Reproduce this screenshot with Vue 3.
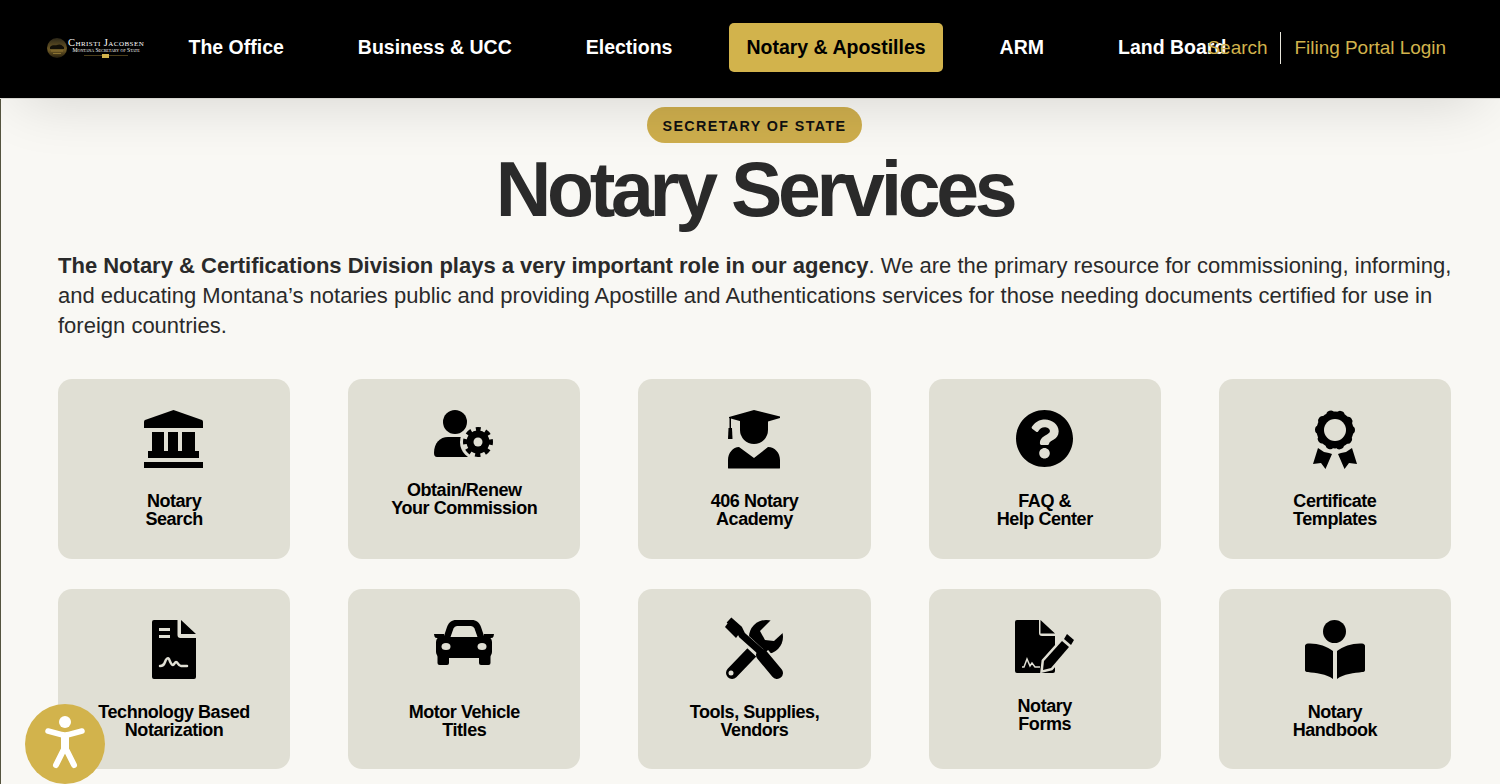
<template>
  <div class="page">
    <header class="topbar">
      <a class="logo">
        <svg class="seal" viewBox="0 0 20 20">
          <defs>
            <linearGradient id="sealGold" x1="0" y1="0" x2="0" y2="1">
              <stop offset="0" stop-color="#2c2718" />
              <stop offset="0.6" stop-color="#6f5a26" />
              <stop offset="1" stop-color="#221c0d" />
            </linearGradient>
          </defs>
          <circle cx="10" cy="10" r="10" fill="url(#sealGold)" />
          <path d="M3 9c3-3 5-1 7-2s4-1 7 2v2H3z" fill="#120f07" />
          <path d="M4 13h12M6 15.5h8" stroke="#9a7f38" stroke-width="0.8" />
        </svg>
        <span class="logo-text">
          <span class="logo-name">Christi Jacobsen</span>
          <span class="logo-sub">Montana Secretary of State</span>
          <span class="logo-rule"><i></i></span>
        </span>
      </a>
      <nav class="nav">
        <a v-for="item in navItems" :key="item" class="nav-item" :class="{ active: item === 'Notary & Apostilles' }">{{ item }}</a>
      </nav>
      <div class="utility">
        <a class="util-link">Search</a>
        <span class="util-sep"></span>
        <a class="util-link">Filing Portal Login</a>
      </div>
    </header>

    <main class="content">
      <div class="intro">
        <span class="badge">SECRETARY OF STATE</span>
        <h1 class="title">Notary Services</h1>
      </div>
      <p class="lead">
        <strong>The Notary &amp; Certifications Division plays a very important role in our agency</strong>. We are the primary resource for commissioning, informing, and educating Montana’s notaries public and providing Apostille and Authentications services for those needing documents certified for use in foreign countries.
      </p>

      <section class="cards">
        <a v-for="card in cards" :key="card.icon" class="card">
          <span class="card-icon">
            <svg :width="card.w" :height="card.h" :viewBox="`0 0 ${card.w} ${card.h}`">
              <g v-if="card.icon === 'bank'">
                <path d="M29.5 0 58 10q1 .5 1 2v6H0v-6q0-1.500 1-2z" />
                <path d="M8 22h12v19H8zM24 22h10v19H24zM38 22h13v19H38zM4 41h51v7H4zM0 52h59v6H0z" />
              </g>
              <g v-else-if="card.icon === 'user-gear'">
                <circle cx="21" cy="12" r="12" />
                <path d="M0 43c0-10 6-16 14-16h14c6 0 10 2 13 6l-3 14H3q-3 0-3-4z" />
                <circle cx="44" cy="32" r="18" class="cut" />
                <circle cx="44" cy="32" r="11.500" />
                <circle cx="44" cy="32" r="12.500" fill="none" stroke="#000" stroke-width="5" stroke-dasharray="5.200 4.620" stroke-dashoffset="2.600" transform="rotate(-90 44 32)" />
                <circle cx="44" cy="32" r="4.500" class="cut" />
              </g>
              <g v-else-if="card.icon === 'grad'">
                <path d="M27 0 53 6.500v1.500L41 11.500 27 15 2 8V7z" />
                <path d="M13 10H41v10a14 14 0 0 1-28 0z" />
                <path d="M2.500 8h1.500v10H2.500z" />
                <path d="M1.500 18h3.500l.5 11H1z" />
                <path d="M1 58v-8c0-7 5-13 11-13l15 11 14-11c7 0 12 6 12 13v8q0 .5-1 .5H2q-1 0-1-.5z" />
              </g>
              <g v-else-if="card.icon === 'question'">
                <path transform="translate(-.9 -.9) scale(.1149)" d="M504 256c0 136.997-111.043 248-248 248S8 392.997 8 256C8 119.083 119.043 8 256 8s248 111.083 248 248zM262.655 90c-54.497 0-89.255 22.957-116.549 63.758-3.536 5.286-2.353 12.415 2.715 16.258l34.699 26.310c5.205 3.947 12.621 3.008 16.665-2.122 17.864-22.658 30.113-35.797 57.303-35.797 20.429 0 45.698 13.148 45.698 32.958 0 14.976-12.363 22.667-32.534 33.976C247.128 238.528 216 254.941 216 296v4c0 6.627 5.373 12 12 12h56c6.627 0 12-5.373 12-12v-1.333c0-28.462 83.186-29.647 83.186-106.667 0-58.002-60.165-102-116.531-102zM256 338c-25.365 0-46 20.635-46 46 0 25.364 20.635 46 46 46s46-20.636 46-46c0-25.365-20.635-46-46-46z" />
              </g>
              <g v-else-if="card.icon === 'award'">
                <circle cx="22" cy="20" r="18.500" />
                <circle cx="22" cy="20" r="16" fill="none" stroke="#000" stroke-width="8" stroke-linecap="round" stroke-dasharray="0.100 9.950" />
                <circle cx="22" cy="20" r="11" class="cut" />
                <path d="M5 38l6 4 5 1 3 1-6.500 15-4.500-6-8 1zM39 38l-6 4-5 1-3 1 6.500 15 4.500-6 8 1z" />
              </g>
              <g v-else-if="card.icon === 'doc-sign'">
                <path d="M2 0h23.500v15q0 3 3 3H44v39q0 2-2 2H2q-2 0-2-2V2q0-2 2-2zM29 0l15 14H29z" />
                <path d="M7 8h11v3H7zM7 15h11v3H7z" class="cut" />
                <path d="M8 46c3 0 4-1 5-4s3-5 4-3 2 6 4 6c1 0 2-3 3-3 2 0 2 4 5 4h6" fill="none" stroke="#e0dfd4" stroke-width="2.500" stroke-linecap="round" />
              </g>
              <g v-else-if="card.icon === 'car'">
                <path d="M9 19 13 7C14.500 2.500 18 0 22 0H38C42 0 45.500 2.500 47 7L51 19z" />
                <rect x="2" y="16" width="56" height="22" rx="6" />
                <rect x="3.500" y="33" width="11.500" height="12" rx="2" />
                <rect x="45" y="33" width="11.500" height="12" rx="2" />
                <path d="M0 14h10v4H3q-2 0-2.500-1.500zM60 14H50v4h7q2 0 2.500-1.500z" />
                <path d="M16.500 17 19.500 8.500Q20.500 6 23 6h14q2.500 0 3.500 2.500l3 8.500z" class="cut" />
                <ellipse cx="12" cy="26.500" rx="4.500" ry="3.500" class="cut" />
                <ellipse cx="48" cy="26.500" rx="4.500" ry="3.500" class="cut" />
              </g>
              <g v-else-if="card.icon === 'tools'">
                <circle cx="42" cy="17" r="17" />
                <path d="M48-1 36 11l5 9 9 1L62 10V-1z" class="cut" />
                <path d="M34 26 8 53" fill="none" stroke="#000" stroke-width="12" stroke-linecap="round" />
                <circle cx="7" cy="53" r="2.500" class="cut" />
                <g fill="none" class="cut-lines">
                  <path d="M38 35 53 53" stroke-width="16" />
                  <path d="M10 9 38 35" stroke-width="10" />
                </g>
                <path d="M5 0 15 9l3 6 20 18" fill="none" stroke="#000" stroke-width="7" />
                <path d="M1 7 6 0l12 10-6 8z" />
                <path d="M38 35 53 53" fill="none" stroke="#000" stroke-width="12" stroke-linecap="round" />
              </g>
              <g v-else-if="card.icon === 'forms'">
                <path d="M2 0h22v13q0 3 3 3h13v35q0 2-2 2H2q-2 0-2-2V2q0-2 2-2zM25.500 0 40 13.500H25.500z" />
                <path d="M47 21l7 6-18 21-8 2 1-9z" stroke="#e0dfd4" stroke-width="5" />
                <path d="M47 21l7 6-18 21-8 2 1-9z" />
                <path d="M52 14l7 6-3 5-7-6z" />
                <path d="M7 47h2l3-8 3 7 2-3 3 4h5" fill="none" stroke="#e0dfd4" stroke-width="1.500" />
              </g>
              <g v-else-if="card.icon === 'reader'">
                <circle cx="29.500" cy="11.500" r="11.500" />
                <path d="M0 26q0-2 3-2.500c9-.5 19 2.500 25 7.500v28c-6-5-18-6-25-7q-3 0-3-2z" />
                <path d="M32 31c6-5 16-8 25-7.500q3 .5 3 2.500v24q0 2-3 2c-7 1-19 2-25 7z" />
              </g>
            </svg>
          </span>
          <span class="card-label">{{ card.label }}</span>
        </a>
      </section>
    </main>

    <button class="a11y" aria-label="Accessibility">
      <svg width="80" height="80" viewBox="0 0 80 80">
        <circle cx="40" cy="18" r="6" fill="#fff" />
        <path d="M23 27l13 3.500q4 1 8 0L57 27" fill="none" stroke="#fff" stroke-width="5.500" stroke-linecap="round" />
        <path d="M40 31v14" stroke="#fff" stroke-width="8" />
        <path d="M31 61l7-14q2-4 4 0l7 14" fill="none" stroke="#fff" stroke-width="6" stroke-linecap="round" />
      </svg>
    </button>
  </div>
</template>

<script setup>
const navItems = ["The Office", "Business & UCC", "Elections", "Notary & Apostilles", "ARM", "Land Board"];

const cards = [
  { label: "Notary\nSearch", icon: "bank", w: 60, h: 59 },
  { label: "Obtain/Renew\nYour Commission", icon: "user-gear", w: 60, h: 48 },
  { label: "406 Notary\nAcademy", icon: "grad", w: 54, h: 59 },
  { label: "FAQ &\nHelp Center", icon: "question", w: 57, h: 59 },
  { label: "Certificate\nTemplates", icon: "award", w: 44, h: 59 },
  { label: "Technology Based\nNotarization", icon: "doc-sign", w: 44, h: 60 },
  { label: "Motor Vehicle\nTitles", icon: "car", w: 60, h: 60 },
  { label: "Tools, Supplies,\nVendors", icon: "tools", w: 60, h: 60 },
  { label: "Notary\nForms", icon: "forms", w: 60, h: 54 },
  { label: "Notary\nHandbook", icon: "reader", w: 60, h: 60 }
];
</script>

<style>
html,
body {
  margin: 0;
  overflow: hidden;
}
</style>

<style scoped>
.page {
  position: relative;
  height: 784px;
  overflow: hidden;
  background: #f9f8f4;
  color: #2a2a2a;
  font-family: "Liberation Sans", Arial, sans-serif;
}

.page::before {
  content: "";
  position: absolute;
  left: 0;
  top: 99px;
  bottom: 0;
  width: 1px;
  background: #55543f;
  z-index: 3;
}

.topbar {
  position: relative;
  z-index: 2;
  display: flex;
  align-items: center;
  height: 99px;
  padding: 0 54px 3px 47px;
  box-sizing: border-box;
  background: #000;
  border-bottom: 1px solid #d6d5cf;
  box-shadow: 0 20px 60px -20px rgba(0, 0, 0, 0.16);
}

.logo {
  display: flex;
  align-items: center;
  gap: 1px;
  width: 97px;
  flex: none;
}

.seal {
  width: 20px;
  height: 20px;
  flex: none;
}

.logo-text {
  display: flex;
  flex-direction: column;
  align-items: center;
  font-family: "Liberation Serif", serif;
  font-variant: small-caps;
  color: #fff;
  white-space: nowrap;
}

.logo-name {
  font-size: 10.5px;
  line-height: 8px;
  letter-spacing: 0.45px;
}

.logo-sub {
  font-size: 5.6px;
  line-height: 6px;
}

.logo-rule {
  position: relative;
  width: 44px;
  height: 1px;
  margin-top: 2px;
  background: #4a3d1a;
}

.logo-rule i {
  position: absolute;
  left: 18px;
  top: -1px;
  width: 7px;
  height: 4px;
  background: #d2b34c;
}

.nav {
  display: flex;
  align-items: center;
  gap: 40px;
  flex: 1;
  width: 0;
  margin-left: 27.5px;
}

.nav-item {
  flex: none;
  padding: 0 17px;
  height: 49px;
  display: flex;
  align-items: center;
  border-radius: 5px;
  font-size: 19.5px;
  font-weight: 700;
  color: #fff;
  white-space: nowrap;
}

.nav-item.active {
  background: #d2b34c;
  color: #000;
}

.utility {
  position: relative;
  display: flex;
  align-items: center;
  flex: none;
}

.util-link {
  font-size: 19px;
  letter-spacing: -0.03px;
  color: #d2b34c;
  white-space: nowrap;
}

.util-sep {
  width: 1px;
  height: 32px;
  margin: 0 13px;
  background: #e8e6dc;
}

.content {
  padding: 8px 49px 0 58px;
}

.intro {
  display: flex;
  flex-direction: column;
  align-items: center;
}

.badge {
  height: 36px;
  width: 215px;
  padding-top: 2px;
  box-sizing: border-box;
  display: flex;
  align-items: center;
  justify-content: center;
  border-radius: 18px;
  background: #ceae4d;
  color: #111;
  font-size: 14.3px;
  font-weight: 700;
  letter-spacing: 1.4px;
}

.title {
  margin: 2px 0 0;
  font-size: 77px;
  line-height: 88px;
  font-weight: 700;
  letter-spacing: -4.3px;
  color: #2a2a2a;
}

.lead {
  margin: 18px -10px 0 0;
  font-size: 22px;
  line-height: 30px;
  color: #2a2a2a;
}

.cards {
  display: grid;
  grid-template-columns: repeat(5, 1fr);
  gap: 30px 58px;
  margin-top: 38px;
}

.card {
  display: flex;
  flex-direction: column;
  align-items: center;
  height: 180px;
  padding-top: 31px;
  box-sizing: border-box;
  border-radius: 14px;
  background: #e0dfd4;
  color: #000;
}

.card-icon {
  display: flex;
  justify-content: center;
  line-height: 0;
}

.card-icon svg {
  overflow: visible;
}

.cut {
  fill: #e0dfd4;
}

.cut-lines {
  stroke: #e0dfd4;
}

.card-label {
  margin-top: 23px;
  font-size: 18px;
  line-height: 18px;
  font-weight: 700;
  letter-spacing: -0.45px;
  text-align: center;
  white-space: pre-line;
}

.a11y {
  position: fixed;
  left: 25px;
  bottom: 0;
  z-index: 5;
  width: 80px;
  height: 80px;
  padding: 0;
  border: 0;
  border-radius: 50%;
  background: #d2b34c;
  line-height: 0;
}
</style>
